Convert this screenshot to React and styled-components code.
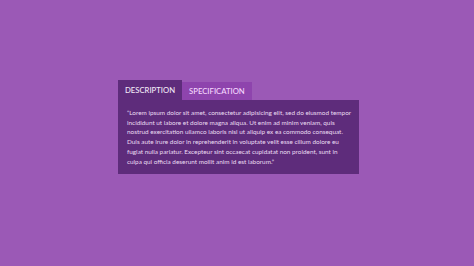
import React, { useState } from 'react';
import styled, { createGlobalStyle } from 'styled-components';

const GlobalStyle = createGlobalStyle`
	html, body {
		margin: 0;
		padding: 0;
		background: #9b59b6;
		font-family: Lato, 'Liberation Sans', sans-serif;
	}
`;

const tabs = [
	{ id: 'description', label: 'Description' },
	{ id: 'specification', label: 'Specification' },
];

const text =
	'\u201CLorem ipsum dolor sit amet, consectetur adipisicing elit, sed do eiusmod tempor incididunt ut labore et dolore magna aliqua. Ut enim ad minim veniam, quis nostrud exercitation ullamco laboris nisi ut aliquip ex ea commodo consequat. Duis aute irure dolor in reprehenderit in voluptate velit esse cillum dolore eu fugiat nulla pariatur. Excepteur sint occaecat cupidatat non proident, sunt in culpa qui officia deserunt mollit anim id est laborum.\u201D';

const App = () => {
	const [active, setActive] = useState('description');
	return (
		<Page>
			<GlobalStyle />
			<Tabs>
				<TabBar>
					{tabs.map((t) => (
						<Tab
							key={t.id}
							$active={active === t.id}
							onClick={() => setActive(t.id)}
						>
							{t.label}
						</Tab>
					))}
				</TabBar>
				<Panel>{text}</Panel>
			</Tabs>
		</Page>
	);
};

const Page = styled.div`
	width: 474px;
	height: 266px;
	display: flex;
	justify-content: flex-start;
	padding: 80px 0 0 118px;
	box-sizing: border-box;
`;

const Tabs = styled.div`
	width: 241px;
	display: flex;
	flex-direction: column;
`;

const TabBar = styled.div`
	display: flex;
	align-items: flex-end;
	height: 20px;
`;

const Tab = styled.div`
	height: ${(p) => (p.$active ? '20px' : '18px')};
	padding: 0 7px;
	display: flex;
	align-items: center;
	box-sizing: border-box;
	background: ${(p) => (p.$active ? '#5e2c7b' : '#8e44ad')};
	color: ${(p) => (p.$active ? '#f3eaf7' : '#f6d9ff')};
	font-size: 7.7px;
	font-weight: 500;
	text-transform: uppercase;
	cursor: pointer;
`;

const Panel = styled.div`
	background: #5e2c7b;
	color: #eadcf2;
	font-size: 6.38px;
	line-height: 9.7px;
	padding: 8px 6px 9px 9px;
	height: 74px;
	box-sizing: border-box;
`;

export default App;
